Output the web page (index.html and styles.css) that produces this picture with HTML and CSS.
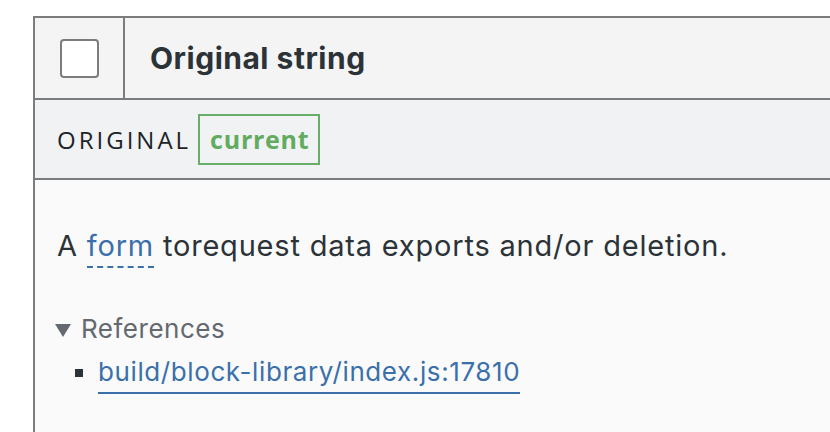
FILE: index.html
```html
<!DOCTYPE html>
<html>
<head lang="en">
    <meta charset="UTF-8">
    <title>Original string</title>
    <link rel="stylesheet" href="styles.css">
</head>
<body>
<div class="panel">
    <div class="head">
        <div class="check_cell"><span class="checkbox"></span></div>
        <div class="title">Original string</div>
    </div>
    <div class="meta">
        <span class="label">Original</span>
        <span class="tag">current</span>
    </div>
    <div class="content">
        <p class="original">A <span class="glossary">form</span> torequest data exports and/or deletion.</p>
        <details class="refs" open>
            <summary>References</summary>
            <ul>
                <li><a href="#">build/block-library/index.js:17810</a></li>
            </ul>
        </details>
    </div>
</div>
</body>
</html>
```

FILE: styles.css
```css
html, body{
    margin: 0;
    height: 100%;
    overflow: hidden;
    background: #fff;
}
.panel{
    display: flex;
    flex-direction: column;
    margin: 16px 0 0 33px;
    width: 820px;
    height: 420px;
    overflow: hidden;
    border-top: 2px solid #7b7c7e;
    border-left: 2px solid #7b7c7e;
    font-family: Inter, "Liberation Sans", sans-serif;
    color: #2c3338;
}
.head{
    display: flex;
    flex: none;
    height: 80px;
    background: #f4f4f4;
    border-bottom: 2px solid #7b7c7e;
}
.check_cell{
    width: 88px;
    border-right: 2px solid #7b7c7e;
    display: flex;
    align-items: center;
    justify-content: center;
}
.checkbox{
    width: 35px;
    height: 35px;
    border: 2px solid #7b7c7e;
    border-radius: 4px;
    background: #fff;
}
.title{
    display: flex;
    align-items: center;
    padding-left: 25px;
    font-size: 30px;
    font-weight: 700;
    letter-spacing: 0.5px;
    color: #2c3338;
}
.meta{
    display: flex;
    flex: none;
    align-items: center;
    height: 78px;
    padding-left: 22px;
    background: #f1f2f3;
    border-bottom: 2px solid #7b7c7e;
    font-family: "Open Sans", sans-serif;
}
.label{
    font-size: 24px;
    letter-spacing: 3px;
    text-transform: uppercase;
    color: #1d2327;
}
.tag{
    margin-left: 7px;
    height: 47px;
    line-height: 47px;
    padding: 0 9px 0 10px;
    border: 2px solid #68ae68;
    font-size: 25px;
    font-weight: 700;
    letter-spacing: 0.03em;
    color: #62ab5f;
}
.content{
    flex: 1;
    padding: 0 22px;
    background: #fafafa;
}
.original{
    margin: 0;
    padding-top: 46px;
    font-size: 29px;
    line-height: 40px;
    letter-spacing: 0.8px;
}
.glossary{
    color: #3a70aa;
    border-bottom: 2px dashed #3a70aa;
    padding-bottom: 3px;
}
.refs{
    margin-top: 47px;
    font-size: 26px;
    letter-spacing: 0.5px;
}
.refs summary{
    display: flex;
    align-items: center;
    color: #646970;
    list-style: none;
}
.refs summary::-webkit-details-marker{
    display: none;
}
.refs summary::before{
    content: "";
    margin: 3px 10px 0 -2px;
    border-left: 8.5px solid transparent;
    border-right: 8.5px solid transparent;
    border-top: 13px solid #646970;
}
.refs ul{
    margin: 12px 0 0;
    padding-left: 41px;
    list-style: square;
}
.refs li::marker{
    color: #2c3338;
}
.refs a{
    color: #3a70aa;
    letter-spacing: 0.6px;
    text-decoration: none;
    padding-bottom: 5px;
    border-bottom: 2px solid #3a70aa;
}
```
